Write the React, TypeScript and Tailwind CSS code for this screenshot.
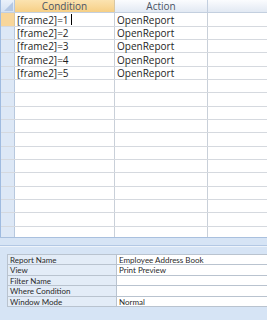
import React from "react";

const rows = ["[frame2]=1", "[frame2]=2", "[frame2]=3", "[frame2]=4", "[frame2]=5"];
const actions = ["OpenReport", "OpenReport", "OpenReport", "OpenReport", "OpenReport"];

const props: [string, string][] = [
  ["Report Name", "Employee Address Book"],
  ["View", "Print Preview"],
  ["Filter Name", ""],
  ["Where Condition", ""],
  ["Window Mode", "Normal"],
];

export default function App() {
  const rowHeights: number[] = [];
  let prev = 13;
  for (let k = 2; k <= 18; k++) {
    const end = Math.round(13.333 * k);
    rowHeights.push(end - prev);
    prev = end;
  }
  return (
    <div
      className="w-[267px] h-[320px] overflow-hidden bg-white flex flex-col text-[#1e1e1e]"
      style={{ fontFamily: '"Open Sans", "Noto Sans", sans-serif' }}
    >
      <div className="h-[237px] flex flex-col overflow-hidden border-l border-l-[#9fbbe0]">
        {/* header */}
        <div className="h-[13px] flex shrink-0 border-b border-[#c3cfdf]">
          <div className="w-[14px] shrink-0 relative bg-gradient-to-b from-[#eaf1fa] to-[#d4e1f2] border-r border-[#b7c8de]">
            <svg className="absolute right-[1px] bottom-[1px]" width="9" height="9" viewBox="0 0 9 9">
              <polygon points="9,0 9,9 0,9" fill="#b4c8e4" />
            </svg>
          </div>
          <div className="w-[100px] shrink-0 flex items-center justify-center text-[10px] leading-none text-[#4a5364] bg-gradient-to-b from-[#fbe3b0] to-[#f6cf85] border-r border-[#d8c7a3]">
            Condition
          </div>
          <div className="w-[93px] shrink-0 flex items-center justify-center text-[10px] leading-none text-[#4a5364] bg-gradient-to-b from-[#fbfcfe] to-[#e2e9f3] border-r border-[#c3cfdf]">
            Action
          </div>
          <div className="flex-1 bg-gradient-to-b from-[#fbfcfe] to-[#e2e9f3]"></div>
        </div>
        {rowHeights.map((h, i) => {
          const cond = rows[i] ?? "";
          const act = actions[i] ?? "";
          const sel = i === 0;
          return (
            <div
              key={i}
              className={`flex shrink-0 border-b border-[#d5d9df] ${h === 14 ? "h-[14px]" : "h-[13px]"}`}
            >
              <div
                className={`w-[14px] shrink-0 border-r ${
                  sel ? "bg-[#f8d69a] border-[#d8c7a3]" : "bg-[#dde8f6] border-[#b7c8de]"
                }`}
              ></div>
              <div className="w-[100px] shrink-0 flex items-center pl-[2px] text-[10px] leading-none border-r border-[#c9d0d9] whitespace-nowrap">
                {cond}
                {sel && <span className="inline-block w-[1px] h-[11px] bg-black ml-[2px]"></span>}
              </div>
              <div className="w-[93px] shrink-0 flex items-center pl-[2px] text-[10px] leading-none border-r border-[#c9d0d9] whitespace-nowrap">
                {act}
              </div>
              <div className="flex-1"></div>
            </div>
          );
        })}
      </div>
      <div className="flex-1 bg-[#d6e4f5] border-t border-[#a9c0de] flex flex-col">
        <div className="h-[7px]"></div>
        <div className="h-[1px] bg-[#b3c8e4]"></div>
        <div className="h-[1px] bg-[#eef4fb]"></div>
        <div className="h-[7px]"></div>
        <div
          className="ml-[7px] flex flex-col border-t border-l border-[#b9c3cf]"
          style={{ fontFamily: 'Lato, "Open Sans", sans-serif' }}
        >
          {props.map(([k, v], i) => (
            <div
              key={k}
              className={`flex border-b border-[#b9c3cf] ${i % 2 === 0 ? "h-[10px]" : "h-[11px]"}`}
            >
              <div className="w-[109px] shrink-0 bg-[#e3ecf7] border-r border-[#b9c3cf] flex items-center pl-[2px] text-[8px] leading-none text-[#2a2a2a] whitespace-nowrap">
                {k}
              </div>
              <div className="flex-1 bg-white flex items-center pl-[2px] text-[8px] leading-none text-[#2a2a2a] whitespace-nowrap">
                {v}
              </div>
            </div>
          ))}
        </div>
      </div>
    </div>
  );
}
